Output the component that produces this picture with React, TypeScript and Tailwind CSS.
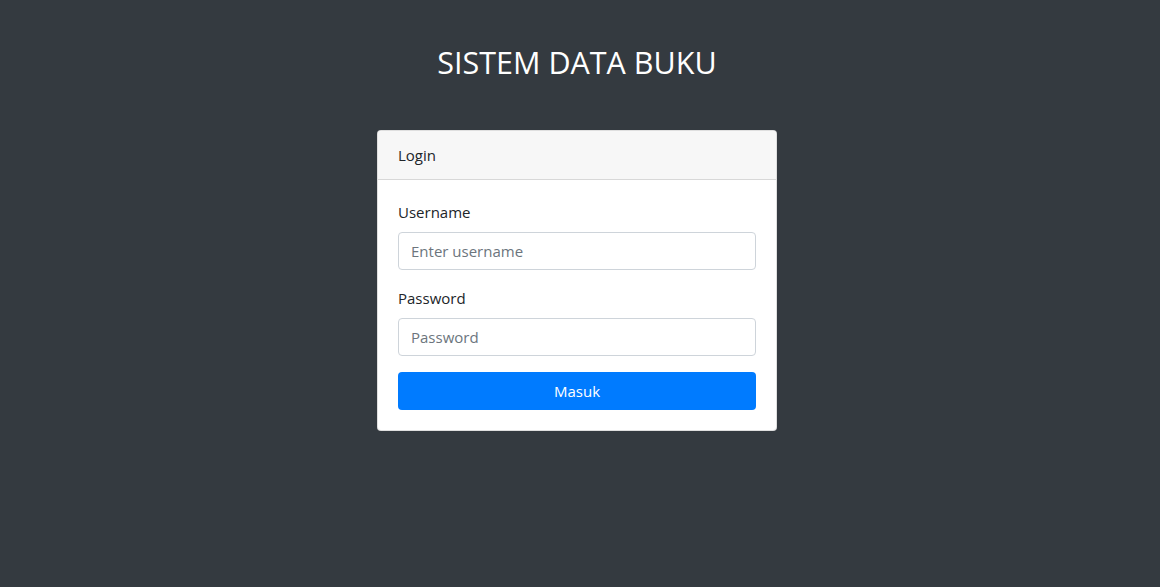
export default function App() {
  return (
    <div className="min-h-[587px] w-full bg-[#343a40] font-['Segoe_UI','Open_Sans',sans-serif] text-[#212529]">
      <div className="pt-[43px] pr-[6px] flex flex-col items-center">
        <h1 className="text-[30.5px] leading-[38px] font-normal text-white">SISTEM DATA BUKU</h1>

        <div className="mt-[49px] w-[400px] bg-white border border-black/[.125] rounded">
          <div className="h-[49px] px-5 flex items-center bg-[#f7f7f7] border-b border-black/[.125] rounded-t text-[15px]">
            Login
          </div>
          <form className="p-5" onSubmit={(e) => e.preventDefault()}>
            <div className="mb-4">
              <label className="block mb-2 text-[15px] leading-6">Username</label>
              <input
                type="text"
                placeholder="Enter username"
                className="block w-full h-[38px] px-3 text-[15px] border border-[#ced4da] rounded placeholder:text-[#6c757d] outline-none"
              />
            </div>
            <div className="mb-4">
              <label className="block mb-2 text-[15px] leading-6">Password</label>
              <input
                type="password"
                placeholder="Password"
                className="block w-full h-[38px] px-3 text-[15px] border border-[#ced4da] rounded placeholder:text-[#6c757d] outline-none"
              />
            </div>
            <button
              type="submit"
              className="block w-full h-[38px] rounded bg-[#007bff] text-white text-[15px]"
            >
              Masuk
            </button>
          </form>
        </div>
      </div>
    </div>
  );
}
